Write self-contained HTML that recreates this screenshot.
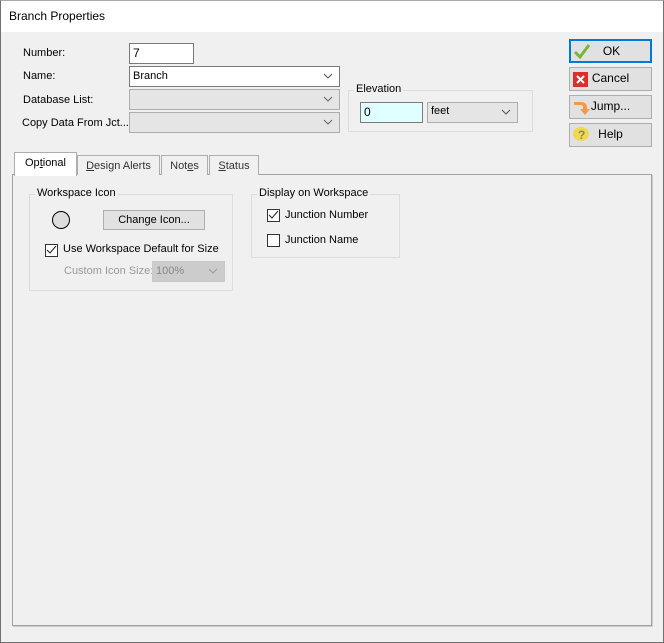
<!DOCTYPE html><html><head><style>
*{box-sizing:border-box}
body{margin:0;width:664px;height:643px;background:#f0f0f0;font-family:"Liberation Sans",sans-serif;font-size:11px;color:#000;position:relative;overflow:hidden}
.a{position:absolute}
.win{left:0;top:0;width:664px;height:643px;border:1px solid #707070;border-top:1px solid #aaa}
.title{left:1px;top:1px;width:662px;height:31px;background:#fff}
.lbl{position:absolute;white-space:nowrap}
.in{position:absolute;border:1px solid #7a7a7a;background:#fff;padding:1px 3px;line-height:16px}
.dis{position:absolute;border:1px solid #adadad;background:#e5e5e5}
.chev{position:absolute;right:5px;top:3px;width:12px;height:12px}
.btn{position:absolute;border:1px solid #adadad;background:#e1e1e1;text-align:center;line-height:20px}
.grp{position:absolute;border:1px solid #dcdcdc}
.gl{position:absolute;top:-8px;left:6px;background:#f0f0f0;padding:0 2px}
.cb{position:absolute;width:13px;height:13px;border:1px solid #333;background:#fff}
.tab{position:absolute;border:1px solid #adadad;border-bottom:none;background:#f0f0f0;text-align:center;line-height:20px;color:#333}
</style></head><body>
<div class="a win"></div>
<div class="a title"></div>
<div class="lbl" style="left:9px;top:9px;font-size:12px">Branch Properties</div>

<div class="lbl" style="left:23px;top:47px">Number:</div>
<div class="lbl" style="left:23px;top:70px">Name:</div>
<div class="lbl" style="left:23px;top:94px">Database List:</div>
<div class="lbl" style="left:22px;top:117px">Copy Data From Jct...</div>

<div class="in" style="left:129px;top:43px;width:65px;height:21px;font-size:12px">7</div>
<div class="in" style="left:129px;top:66px;width:211px;height:21px">Branch<svg class="chev" viewBox="0 0 12 12"><path d="M2 4l4 4 4-4" fill="none" stroke="#555"/></svg></div>
<div class="dis" style="left:129px;top:89px;width:211px;height:21px"><svg class="chev" viewBox="0 0 12 12"><path d="M2 4l4 4 4-4" fill="none" stroke="#666"/></svg></div>
<div class="dis" style="left:129px;top:112px;width:211px;height:21px"><svg class="chev" viewBox="0 0 12 12"><path d="M2 4l4 4 4-4" fill="none" stroke="#666"/></svg></div>

<div class="grp" style="left:348px;top:90px;width:185px;height:42px"><span class="gl" style="left:5px">Elevation</span></div>
<div class="in" style="left:360px;top:102px;width:63px;height:21px;background:#e0ffff;font-size:12px">0</div>
<div class="dis" style="left:427px;top:102px;width:91px;height:21px;padding:2px 3px">feet<svg class="chev" viewBox="0 0 12 12"><path d="M2 4l4 4 4-4" fill="none" stroke="#555"/></svg></div>

<div class="btn" style="left:569px;top:39px;width:83px;height:24px;border:2px solid #0078d7;line-height:20px;padding-left:2px;font-size:12px">OK
<svg class="a" style="left:2px;top:1px" width="18" height="18" viewBox="0 0 18 18"><path d="M2 10l5 5L16 3" fill="none" stroke="#7ab53a" stroke-width="3"/></svg></div>
<div class="btn" style="left:569px;top:67px;width:83px;height:24px;font-size:12px">Cancel
<svg class="a" style="left:3px;top:4px" width="15" height="15"><rect width="15" height="15" fill="#d9302c"/><path d="M4 4l7 7M11 4l-7 7" stroke="#fff" stroke-width="2"/></svg></div>
<div class="btn" style="left:569px;top:95px;width:83px;height:24px;font-size:12px">Jump...
<svg class="a" style="left:2px;top:2px" width="18" height="18"><path d="M2 4h8a5 5 0 015 5v2h3l-5 6-5-6h3v-2a2 2 0 00-2-2H2z" fill="#f39a4a"/></svg></div>
<div class="btn" style="left:569px;top:123px;width:83px;height:24px;font-size:12px">Help
<svg class="a" style="left:2px;top:2px" width="18" height="18"><ellipse cx="9" cy="8" rx="8" ry="7" fill="#f0d850"/><text x="6" y="13" font-size="12" font-weight="bold" fill="#886">?</text></svg></div>

<div class="a" style="left:12px;top:174px;width:640px;height:452px;border:1px solid #a0a0a8;background:#f0f0f0;box-shadow:1px 1px 0 #ccc"></div>
<div class="tab" style="left:14px;width:63px;background:#fff;color:#000;top:152px;height:24px">Op<u>t</u>ional</div>
<div class="tab" style="left:77px;top:155px;width:83px;height:20px"><u>D</u>esign Alerts</div>
<div class="tab" style="left:161px;top:155px;width:47px;height:20px">Not<u>e</u>s</div>
<div class="tab" style="left:209px;top:155px;width:50px;height:20px"><u>S</u>tatus</div>

<div class="grp" style="left:29px;top:194px;width:204px;height:97px"><span class="gl" style="left:5px">Workspace Icon</span></div>
<div class="a" style="left:52px;top:211px;width:18px;height:18px;border-radius:50%;border:1px solid #000;background:#ddd"></div>
<div class="btn" style="left:103px;top:210px;width:102px;height:20px;line-height:18px">Change Icon...</div>
<div class="cb" style="left:45px;top:244px"><svg width="11" height="11"><path d="M1 5l3 3 6-7" fill="none" stroke="#222"/></svg></div>
<div class="lbl" style="left:63px;top:243px">Use Workspace Default for Size</div>
<div class="lbl" style="left:64px;top:265px;color:#999">Custom Icon Size:</div>
<div class="dis" style="left:152px;top:261px;width:73px;height:21px;background:#ccc;color:#888;padding:3px 3px;border-color:#c8c8c8">100%<svg class="chev" viewBox="0 0 12 12"><path d="M2 4l4 4 4-4" fill="none" stroke="#999"/></svg></div>

<div class="grp" style="left:251px;top:194px;width:149px;height:64px"><span class="gl" style="left:5px">Display on Workspace</span></div>
<div class="cb" style="left:267px;top:209px"><svg width="11" height="11"><path d="M1 5l3 3 6-7" fill="none" stroke="#222"/></svg></div>
<div class="lbl" style="left:285px;top:209px">Junction Number</div>
<div class="cb" style="left:267px;top:234px"></div>
<div class="lbl" style="left:285px;top:234px">Junction Name</div>
</body></html>
